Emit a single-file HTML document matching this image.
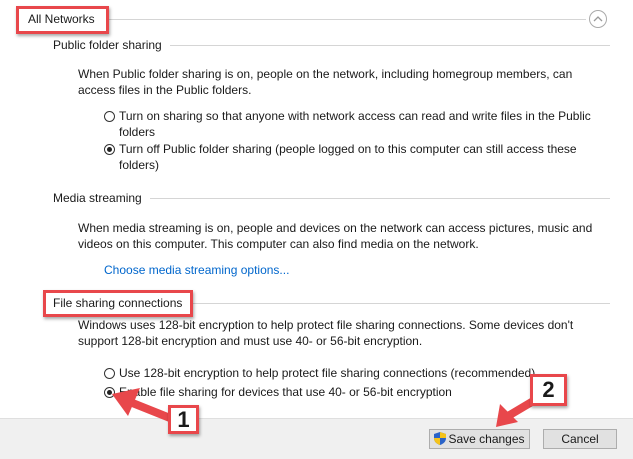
<!DOCTYPE html>
<html><head><style>
body{margin:0;width:633px;height:458px;background:#fff;font-family:"Liberation Sans",sans-serif;font-size:12px;color:#1a1a1a;position:relative;overflow:hidden}
.t{position:absolute;white-space:nowrap;line-height:16px}
.l{position:absolute;height:1px;background:#d5d5d5}
.r{position:absolute;width:11px;height:11px;border:1px solid #333;border-radius:50%;box-sizing:border-box;background:#fff}
.r.on::after{content:"";position:absolute;left:2px;top:2px;width:5px;height:5px;border-radius:50%;background:#222}
.box{position:absolute;border:3px solid #e8474b;box-sizing:border-box;box-shadow:1px 2px 3px rgba(0,0,0,.35)}
.num{position:absolute;background:#fff;border:3px solid #e8474b;box-sizing:border-box;font-weight:bold;font-size:22px;text-align:center;box-shadow:1px 2px 3px rgba(0,0,0,.35)}
.btn{position:absolute;top:429px;height:20px;border:1px solid #adadad;background:#e1e1e1;box-sizing:border-box;text-align:center;line-height:18px}
</style></head><body>
<div class="t" style="left:28px;top:11px">All Networks</div>
<div class="l" style="left:108px;top:19px;width:478px"></div>
<svg style="position:absolute;left:588px;top:9px" width="20" height="20"><circle cx="10" cy="10" r="8.5" fill="none" stroke="#aaa"/><path d="M6 12 L10 8 L14 12" fill="none" stroke="#999" stroke-width="1.3"/></svg>
<div class="t" style="left:53px;top:37px">Public folder sharing</div>
<div class="l" style="left:170px;top:45px;width:440px"></div>
<div class="t" style="left:78px;top:66px">When Public folder sharing is on, people on the network, including homegroup members, can</div>
<div class="t" style="left:78px;top:82px">access files in the Public folders.</div>
<div class="r" style="left:104px;top:111px"></div>
<div class="t" style="left:119px;top:108px">Turn on sharing so that anyone with network access can read and write files in the Public</div>
<div class="t" style="left:119px;top:124px">folders</div>
<div class="r on" style="left:104px;top:144px"></div>
<div class="t" style="left:119px;top:141px">Turn off Public folder sharing (people logged on to this computer can still access these</div>
<div class="t" style="left:119px;top:157px">folders)</div>
<div class="t" style="left:53px;top:190px">Media streaming</div>
<div class="l" style="left:150px;top:198px;width:460px"></div>
<div class="t" style="left:78px;top:220px">When media streaming is on, people and devices on the network can access pictures, music and</div>
<div class="t" style="left:78px;top:236px">videos on this computer. This computer can also find media on the network.</div>
<div class="t" style="left:104px;top:262px;color:#0066cc">Choose media streaming options...</div>
<div class="t" style="left:53px;top:295px">File sharing connections</div>
<div class="l" style="left:192px;top:303px;width:418px"></div>
<div class="t" style="left:78px;top:317px">Windows uses 128-bit encryption to help protect file sharing connections. Some devices don't</div>
<div class="t" style="left:78px;top:333px">support 128-bit encryption and must use 40- or 56-bit encryption.</div>
<div class="r" style="left:104px;top:368px"></div>
<div class="t" style="left:119px;top:365px">Use 128-bit encryption to help protect file sharing connections (recommended)</div>
<div class="r on" style="left:104px;top:387px"></div>
<div class="t" style="left:119px;top:384px">Enable file sharing for devices that use 40- or 56-bit encryption</div>
<div style="position:absolute;left:0;top:418px;width:633px;height:40px;background:#f0f0f0;border-top:1px solid #dfdfdf"></div>
<div class="btn" style="left:429px;width:101px"><svg width="12" height="13" style="vertical-align:-2px;margin-right:2px"><path d="M6 0 L12 2 V6 C12 10 9 12 6 13 C3 12 0 10 0 6 V2Z" fill="#2a63c8"/><path d="M6 0 L12 2 V6 H6Z M6 6 H0 C0 10 3 12 6 13Z" fill="#f5c31b"/></svg>Save changes</div>
<div class="btn" style="left:543px;width:74px">Cancel</div>
<div class="box" style="left:16px;top:6px;width:93px;height:28px"></div>
<div class="box" style="left:43px;top:290px;width:150px;height:27px"></div>
<svg style="position:absolute;left:0;top:0" width="633" height="458"><g fill="#e8474b" stroke="#e8474b" stroke-width="8" stroke-linecap="round"><line x1="170" y1="418" x2="130" y2="402"/><line x1="535" y1="400" x2="508" y2="416"/></g><path d="M112 394 L140 388 L128 416Z" fill="#e8474b"/><path d="M496 427 L500 404 L518 422Z" fill="#e8474b"/></svg>
<div class="num" style="left:168px;top:405px;width:31px;height:29px;line-height:23px">1</div>
<div class="num" style="left:530px;top:374px;width:37px;height:32px;line-height:26px">2</div>
</body></html>
